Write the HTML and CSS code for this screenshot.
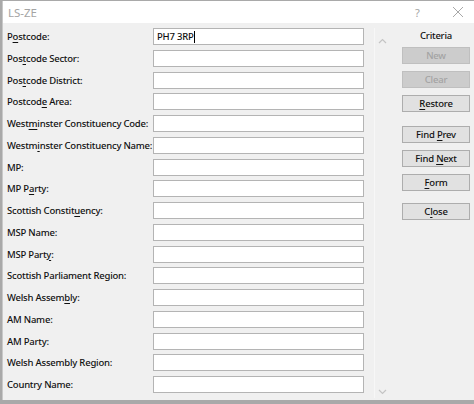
FILE: index.html
```html
<!DOCTYPE html>
<html>
<head>
<meta charset="utf-8">
<link rel="stylesheet" href="styles.css">
</head>
<body>
<div class="window">
  <div class="titlebar">
    <span class="title">LS-ZE</span>
    <span class="help">?</span>
    <span class="close-x">
      <svg width="12" height="12" viewBox="0 0 12 12"><path d="M1 1 L11 11 M11 1 L1 11" stroke="#a8a8a8" stroke-width="1" fill="none"/></svg>
    </span>
  </div>
  <div class="content">
    <div class="fields">
      <label class="lbl">P<u>o</u>stcode:</label><div class="inp">PH7 3RP<span class="caret"></span></div>
      <label class="lbl">Pos<u>t</u>code Sector:</label><div class="inp"></div>
      <label class="lbl">Pos<u>t</u>code District:</label><div class="inp"></div>
      <label class="lbl">Postcod<u>e</u> Area:</label><div class="inp"></div>
      <label class="lbl">West<u>m</u>inster Constituency Code:</label><div class="inp"></div>
      <label class="lbl">Westm<u>i</u>nster Constituency Name:</label><div class="inp"></div>
      <label class="lbl">MP:</label><div class="inp"></div>
      <label class="lbl">MP P<u>a</u>rty:</label><div class="inp"></div>
      <label class="lbl">Scottish Constit<u>u</u>ency:</label><div class="inp"></div>
      <label class="lbl">MSP Name:</label><div class="inp"></div>
      <label class="lbl">MSP Part<u>y</u>:</label><div class="inp"></div>
      <label class="lbl">Scottish Parliament Region:</label><div class="inp"></div>
      <label class="lbl">Welsh Assem<u>b</u>ly:</label><div class="inp"></div>
      <label class="lbl">AM Name:</label><div class="inp"></div>
      <label class="lbl">AM Party:</label><div class="inp"></div>
      <label class="lbl">Welsh Assembly Region:</label><div class="inp"></div>
      <label class="lbl">Country Name:</label><div class="inp"></div>
    </div>
    <div class="scrollbar">
      <svg class="arrow" width="9" height="6" viewBox="0 0 9 6"><path d="M1 5 L4.5 1.5 L8 5" stroke="#c4c4c4" stroke-width="1.2" fill="none"/></svg>
      <svg class="arrow" width="9" height="6" viewBox="0 0 9 6"><path d="M1 1 L4.5 4.5 L8 1" stroke="#c4c4c4" stroke-width="1.2" fill="none"/></svg>
    </div>
    <div class="panel">
      <div class="criteria">Criteria</div>
      <div class="btn disabled">New</div>
      <div class="btn disabled">Clear</div>
      <div class="btn"><u>R</u>estore</div>
      <div class="btn sep1">Find <u>P</u>rev</div>
      <div class="btn">Find <u>N</u>ext</div>
      <div class="btn"><u>F</u>orm</div>
      <div class="btn sep2">C<u>l</u>ose</div>
    </div>
  </div>
</div>
</body>
</html>
```
FILE: styles.css
```css
html, body {
  margin: 0;
  padding: 0;
}
body {
  width: 474px;
  height: 404px;
  background: #a9a9a9;
  overflow: hidden;
  font-family: "Noto Sans", "Open Sans", sans-serif;
  font-size: 9.5px;
  font-weight: 500;
  letter-spacing: -0.22px;
  color: #111111;
}
.window {
  margin: 1px 0 0 2px;
  width: 472px;
  height: 399px;
  background: #f0f0f0;
  border-left: 1px solid #c8c8c8;
  box-sizing: border-box;
  display: flex;
  flex-direction: column;
}
.titlebar {
  height: 22px;
  flex: none;
  background: #ffffff;
  display: flex;
  align-items: center;
  position: relative;
}
.title {
  margin-left: 5px;
  font-size: 11.5px;
  font-weight: 400;
  color: #a4a4a4;
  letter-spacing: 0;
}
.help {
  position: absolute;
  left: 412px;
  top: 4px;
  font-size: 11px;
  font-weight: 400;
  color: #a4a4a4;
}
.close-x {
  position: absolute;
  left: 449px;
  top: 5px;
  line-height: 0;
}
.content {
  flex: 1;
  display: flex;
  padding-top: 5px;
}
.fields {
  display: grid;
  grid-template-columns: 146px 211px;
  grid-auto-rows: 17px;
  row-gap: 4.75px;
  padding-left: 4px;
  align-content: start;
}
.lbl {
  display: block;
  line-height: 17px;
  white-space: nowrap;
}
.lbl u {
  text-decoration-thickness: 1px;
  text-underline-offset: 1.5px;
}
.inp {
  background: #ffffff;
  border: 1px solid #b4b4b4;
  box-sizing: border-box;
  display: flex;
  align-items: center;
  padding-left: 3px;
}
.caret {
  width: 1px;
  height: 12px;
  background: #000;
}
.scrollbar {
  margin-left: 10px;
  width: 16px;
  border-left: 1px solid #f7f7f7;
  background: #f0f0f0;
  display: flex;
  flex-direction: column;
  justify-content: space-between;
  align-items: center;
  padding: 10px 0 3px;
  box-sizing: border-box;
  height: 370px;
}
.panel {
  margin-left: 12px;
  width: 68px;
  display: flex;
  flex-direction: column;
  gap: 7px;
}
.criteria {
  text-align: center;
  height: 14px;
  line-height: 14px;
  margin-top: 1px;
  margin-bottom: -3px;
}
.btn {
  height: 17px;
  box-sizing: border-box;
  background: #e1e1e1;
  border: 1px solid #adadad;
  text-align: center;
  line-height: 15px;
}
.btn u {
  text-underline-offset: 1.5px;
}
.btn.disabled {
  background: #cccccc;
  border-color: #bfbfbf;
  color: #a3a3a3;
}
.btn.sep1 {
  margin-top: 7px;
}
.btn.sep2 {
  margin-top: 5px;
}
```
